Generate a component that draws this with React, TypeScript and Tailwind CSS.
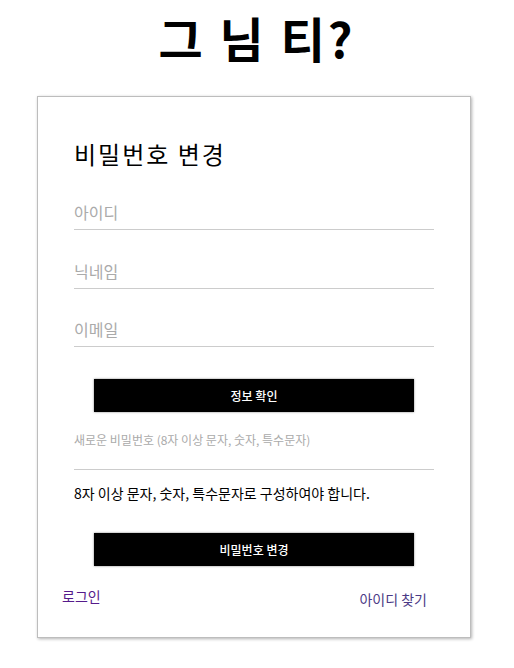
export default function App() {
  return (
    <div className="min-h-screen bg-white font-['Noto_Sans_CJK_KR','Noto_Sans',sans-serif] text-black">
      {/* Brand */}
      <h1 className="pt-[8px] text-center text-[48px] font-bold leading-[58px] tracking-[3px]">그 님 티?</h1>

      {/* Card */}
      <div className="mx-auto mt-[30px] w-[434px] border border-[#bdbdbd] bg-white px-[36px] pt-[41px] pb-[28px] shadow-[1px_1px_3px_rgba(0,0,0,0.3)] relative left-[-3px]">
        <h2 className="text-[24px] leading-[32px] font-normal tracking-[2px]">비밀번호 변경</h2>

        <form className="flex flex-col" onSubmit={e => e.preventDefault()}>
          <input
            placeholder="아이디"
            className="mt-[24px] h-[36px] w-full border-b border-[#cccccc] text-[16px] outline-none placeholder:text-[#aaaaaa]"
          />
          <input
            placeholder="닉네임"
            className="mt-[23px] h-[36px] w-full border-b border-[#cccccc] text-[16px] outline-none placeholder:text-[#aaaaaa]"
          />
          <input
            placeholder="이메일"
            className="mt-[22px] h-[36px] w-full border-b border-[#cccccc] text-[16px] outline-none placeholder:text-[#aaaaaa]"
          />

          <button className="mx-auto mt-[32px] h-[33px] w-[320px] bg-black text-[12px] font-medium text-white shadow-[0_0_2px_rgba(0,0,0,0.5)]">
            정보 확인
          </button>

          <input
            type="password"
            placeholder="새로운 비밀번호 (8자 이상 문자, 숫자, 특수문자)"
            className="mt-[14px] h-[44px] w-full border-b border-[#cccccc] pb-[16px] text-[12px] outline-none placeholder:text-[#aaaaaa]"
          />
          <p className="mt-[13px] text-[14px] leading-[20px]">8자 이상 문자, 숫자, 특수문자로 구성하여야 합니다.</p>

          <button className="mx-auto mt-[30px] h-[33px] w-[320px] bg-black text-[12px] font-medium text-white shadow-[0_0_2px_rgba(0,0,0,0.5)]">
            비밀번호 변경
          </button>
        </form>

        {/* Links */}
        <div className="mt-[20px] flex items-start justify-between">
          <a href="#" className="ml-[-12px] text-[14px] leading-[20px] text-[#551a8b]">로그인</a>
          <a href="#" className="mr-[7px] mt-[3px] text-[14px] leading-[20px] text-[#4b3a86]">아이디 찾기</a>
        </div>
      </div>
    </div>
  );
}
